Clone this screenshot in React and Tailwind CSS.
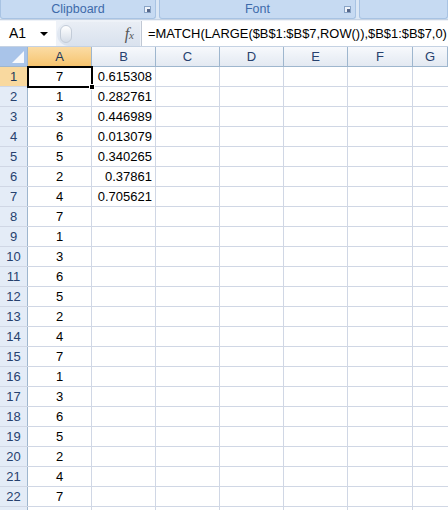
import React from "react";

const colA = [7, 1, 3, 6, 5, 2, 4, 7, 1, 3, 6, 5, 2, 4, 7, 1, 3, 6, 5, 2, 4, 7, ""];
const colB = ["0.615308", "0.282761", "0.446989", "0.013079", "0.340265", "0.37861", "0.705621"];
const letters = ["A", "B", "C", "D", "E", "F", "G"];
const widths = ["w-[64px]", "w-[64px]", "w-[64px]", "w-[64px]", "w-[64px]", "w-[65px]", "flex-1"];

function Launcher() {
  return (
    <span className="relative block h-[7px] w-[7px] border border-[#8aa4c6] bg-[#eef3fa]">
      <span className="absolute bottom-0 right-0 h-[3px] w-[3px] bg-[#55678a]" />
    </span>
  );
}

function RibbonGroup({ label, className, launcher = true }) {
  return (
    <div className={`relative flex h-full items-center justify-center rounded-b-[3px] border border-t-0 border-[#a8c3e3] bg-[#c6daf2] ${className}`}>
      <span className="text-[12.5px] text-[#3e6aaa]">{label}</span>
      {launcher && (
        <span className="absolute right-[4px] top-[6px]">
          <Launcher />
        </span>
      )}
    </div>
  );
}

export default function App() {
  return (
    <div className="h-[510px] w-[448px] overflow-hidden bg-white font-['Liberation_Sans',Arial,sans-serif] text-[13px] text-black">
      {/* ribbon group labels */}
      <div className="flex h-[19px] gap-[3px] bg-[#dbe7f5]">
        <RibbonGroup label="Clipboard" className="w-[156px]" />
        <RibbonGroup label="Font" className="w-[197px]" />
        <RibbonGroup label="" className="flex-1" launcher={false} />
      </div>

      {/* formula bar */}
      <div className="flex h-[28px] items-center border-y border-[#c5d2e3] bg-[#eef2f8] pt-px">
        <div className="flex h-[25px] w-[56px] shrink-0 items-center justify-between bg-white pl-[9px] pr-[8px]">
          <span className="text-[14px]">A1</span>
          <span className="h-0 w-0 border-x-[4px] border-t-[4px] border-x-transparent border-t-black" />
        </div>
        <div className="ml-[1px] flex h-[24px] w-[83px] shrink-0 items-center justify-between rounded-l-full bg-gradient-to-b from-[#e9eef5] to-[#d9e2ee] pr-[6px]">
          <span className="ml-[3px] h-[18px] w-[12px] rounded-full border border-[#c3ccd8] bg-gradient-to-b from-white to-[#d5dde8]" />
          <span className="font-['Liberation_Serif',serif] text-[16px] italic leading-none text-[#555]">
            f<span className="text-[11px]">x</span>
          </span>
        </div>
        <div className="ml-px flex h-[25px] min-w-0 flex-1 items-center whitespace-nowrap border-l border-[#c0c8d4] bg-white pl-[6px] text-[12.9px]">
          =MATCH(LARGE($B$1:$B$7,ROW()),$B$1:$B$7,0)
        </div>
      </div>

      {/* grid */}
      <div className="relative">
        <div className="flex h-[20px] border-b border-[#9eb6ce]">
          <div className="relative w-[28px] border-r border-[#9eb6ce] bg-[#a9c4e9]">
            <span className="absolute bottom-[3px] right-[3px] h-0 w-0 border-b-[12px] border-l-[12px] border-b-white border-l-transparent opacity-90" />
          </div>
          {letters.map((l, i) => (
            <div
              key={l}
              className={`${widths[i]} flex items-center justify-center border-r border-[#9eb6ce] text-[13px] ${
                i === 0
                  ? "bg-gradient-to-b from-[#fbdca4] to-[#f6c46e] text-[#1e395b]"
                  : "bg-gradient-to-b from-[#f7f9fc] to-[#e3e9f2] text-[#27416e]"
              }`}
            >
              {l}
            </div>
          ))}
        </div>

        {colA.map((a, r) => (
          <div key={r} className="flex h-[20px] border-b border-[#d0d7e5]">
            <div
              className={`flex w-[28px] items-center justify-center border-r border-[#9eb6ce] text-[13px] ${
                r === 0 ? "bg-[#f9d99f] text-[#1e395b]" : "bg-[#e4ecf7] text-[#27416e]"
              }`}
            >
              {r < 22 ? r + 1 : ""}
            </div>
            <div className="flex w-[64px] items-center justify-center border-r border-[#d0d7e5] text-[13px]">{a}</div>
            <div className="flex w-[64px] items-center justify-end border-r border-[#d0d7e5] pr-[3px] text-[13px]">
              {colB[r] || ""}
            </div>
            <div className="w-[64px] border-r border-[#d0d7e5]" />
            <div className="w-[64px] border-r border-[#d0d7e5]" />
            <div className="w-[64px] border-r border-[#d0d7e5]" />
            <div className="w-[65px] border-r border-[#d0d7e5]" />
            <div className="flex-1" />
          </div>
        ))}

        {/* active cell A1 */}
        <div className="pointer-events-none absolute left-[27px] top-[19px] h-[22px] w-[66px] border-2 border-black">
          <span className="absolute -bottom-[4px] -right-[4px] h-[6px] w-[6px] border border-white bg-black" />
        </div>
      </div>
    </div>
  );
}
